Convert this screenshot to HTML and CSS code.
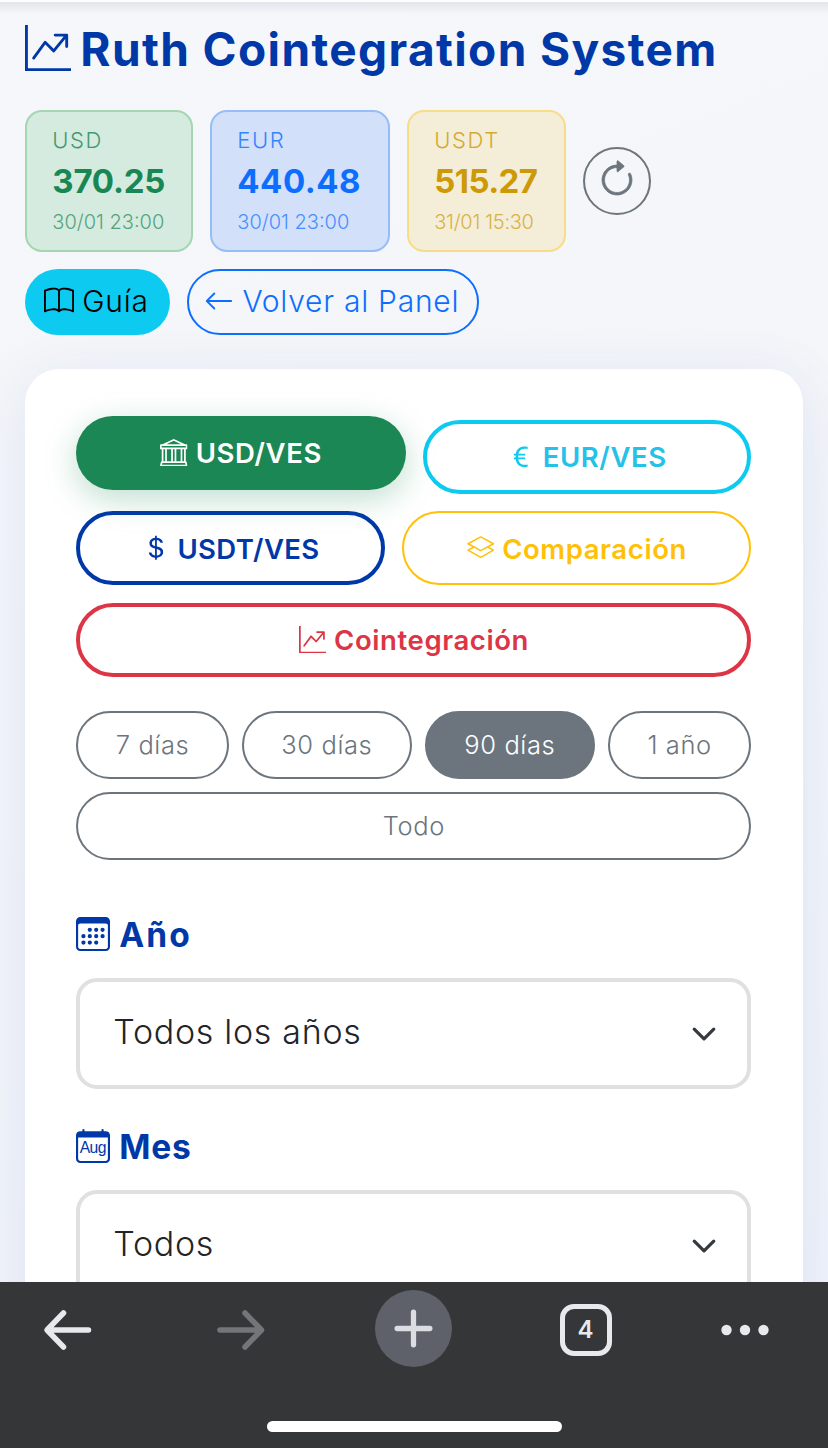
FILE: index.html
```html
<!DOCTYPE html>
<html lang="es">
<head>
    <meta charset="UTF-8">
    <meta name="viewport" content="width=device-width, initial-scale=1.0">
    <title>Ruth Cointegration System</title>
    <link rel="stylesheet" href="styles.css">
</head>
<body>
    <!-- Icons -->
    <svg class="sprite" width="0" height="0">
        <symbol id="graph" viewBox="0 0 16 16"><path d="M0 0h1v15h15v1H0zm10 3.5a.5.5 0 0 1 .5-.5h4a.5.5 0 0 1 .5.5v4a.5.5 0 0 1-1 0V4.9l-3.613 4.417a.5.5 0 0 1-.74.037L7.06 6.767l-3.656 5.027a.5.5 0 0 1-.808-.588l4-5.5a.5.5 0 0 1 .758-.06l2.609 2.61L13.445 4H10.5a.5.5 0 0 1-.5-.5"/></symbol>
        <symbol id="refresh" viewBox="0 0 16 16"><path d="M8 3a5 5 0 1 0 4.546 2.914.5.5 0 0 1 .908-.417A6 6 0 1 1 8 2z"/><path d="M8 4.466V.534a.25.25 0 0 1 .41-.192l2.36 1.966c.12.1.12.284 0 .384L8.41 4.658A.25.25 0 0 1 8 4.466"/></symbol>
        <symbol id="book" viewBox="0 0 16 16"><path d="M1 2.828c.885-.37 2.154-.769 3.388-.893 1.33-.134 2.458.063 3.112.752v9.746c-.935-.53-2.12-.603-3.213-.493-1.18.12-2.37.461-3.287.811zm7.5-.141c.654-.689 1.782-.886 3.112-.752 1.234.124 2.503.523 3.388.893v9.923c-.918-.35-2.107-.692-3.287-.81-1.094-.111-2.278-.039-3.213.492zM8 1.783C7.015.936 5.587.81 4.287.94c-1.514.153-3.042.672-3.994 1.105A.5.5 0 0 0 0 2.5v11a.5.5 0 0 0 .707.455c.882-.4 2.303-.881 3.68-1.02 1.409-.142 2.59.087 3.223.877a.5.5 0 0 0 .78 0c.633-.79 1.814-1.019 3.222-.877 1.378.139 2.8.62 3.681 1.02A.5.5 0 0 0 16 13.5v-11a.5.5 0 0 0-.293-.455c-.952-.433-2.48-.952-3.994-1.105C10.413.809 8.985.936 8 1.783"/></symbol>
        <symbol id="arrow-left" viewBox="0 0 16 16"><path d="M15 8a.5.5 0 0 0-.5-.5H2.707l3.147-3.146a.5.5 0 1 0-.708-.708l-4 4a.5.5 0 0 0 0 .708l4 4a.5.5 0 0 0 .708-.708L2.707 8.5H14.5A.5.5 0 0 0 15 8"/></symbol>
        <symbol id="bank" viewBox="0 0 16 16"><path d="m8 0 6.61 3h.89a.5.5 0 0 1 .5.5v2a.5.5 0 0 1-.5.5H15v7a.5.5 0 0 1 .485.38l.5 2a.498.498 0 0 1-.485.62H.5a.498.498 0 0 1-.485-.62l.5-2A.5.5 0 0 1 1 13V6H.5a.5.5 0 0 1-.5-.5v-2A.5.5 0 0 1 .5 3h.89zM3.777 3h8.447L8 1zM2 6v7h1V6zm2 0v7h2.5V6zm3.5 0v7h1V6zm2 0v7H12V6zM13 6v7h1V6zm2-1V4H1v1zm-.39 9H1.39l-.25 1h13.72z"/></symbol>
        <symbol id="euro" viewBox="0 0 16 16"><path d="M4 9.42h1.063C5.4 12.323 7.317 14 10.34 14c.622 0 1.167-.068 1.659-.185v-1.3c-.484.119-1.045.17-1.659.17-2.1 0-3.455-1.198-3.775-3.264h4.017v-.928H6.497v-.936q-.002-.165.008-.329h4.078v-.927H6.618c.388-1.898 1.719-2.985 3.723-2.985.614 0 1.175.05 1.659.177V2.194A6.6 6.6 0 0 0 10.341 2c-2.928 0-4.82 1.569-5.244 4.3H4v.928h1.01v1.265H4v.928z"/></symbol>
        <symbol id="dollar" viewBox="0 0 16 16"><path d="M4 10.781c.148 1.667 1.513 2.85 3.591 3.003V15h1.043v-1.216c2.27-.179 3.678-1.438 3.678-3.3 0-1.59-.947-2.51-2.956-3.028l-.722-.187V3.467c1.122.11 1.879.714 2.07 1.616h1.47c-.166-1.6-1.54-2.748-3.54-2.875V1H7.591v1.233c-1.939.23-3.27 1.472-3.27 3.156 0 1.454.966 2.483 2.661 2.917l.61.162v4.031c-1.149-.17-1.94-.8-2.131-1.718zm3.391-3.836c-1.043-.263-1.6-.825-1.6-1.616 0-.944.704-1.641 1.8-1.828v3.495l-.2-.05zm1.591 1.872c1.287.323 1.852.859 1.852 1.769 0 1.097-.826 1.828-2.2 1.939V8.73z"/></symbol>
        <symbol id="layers" viewBox="0 0 16 16"><path d="M8 1.7 15.4 5.700 8 9.700.6 5.700zM3.700 7.700.6 9.400 8 13.600l7.400-4.200-3.100-1.700" fill="none" stroke="currentColor" stroke-width=".9" stroke-linejoin="round"/></symbol>
        <symbol id="calendar" viewBox="0 0 16 16"><path d="M14 0H2a2 2 0 0 0-2 2v12a2 2 0 0 0 2 2h12a2 2 0 0 0 2-2V2a2 2 0 0 0-2-2M1 3.857C1 3.384 1.448 3 2 3h12c.552 0 1 .384 1 .857v10.286c0 .473-.448.857-1 .857H2c-.552 0-1-.384-1-.857z"/><path d="M6.5 7a1 1 0 1 0 0-2 1 1 0 0 0 0 2m3 0a1 1 0 1 0 0-2 1 1 0 0 0 0 2m3 0a1 1 0 1 0 0-2 1 1 0 0 0 0 2m-9 3a1 1 0 1 0 0-2 1 1 0 0 0 0 2m3 0a1 1 0 1 0 0-2 1 1 0 0 0 0 2m3 0a1 1 0 1 0 0-2 1 1 0 0 0 0 2m3 0a1 1 0 1 0 0-2 1 1 0 0 0 0 2m-9 3a1 1 0 1 0 0-2 1 1 0 0 0 0 2m3 0a1 1 0 1 0 0-2 1 1 0 0 0 0 2m3 0a1 1 0 1 0 0-2 1 1 0 0 0 0 2"/></symbol>
        <symbol id="chevron" viewBox="0 0 16 16"><path d="m2 5 6 6 6-6" fill="none" stroke="#343a40" stroke-width="2" stroke-linecap="round" stroke-linejoin="round"/></symbol>
    </svg>

    <div class="page">
        <header>
            <h1><svg class="icon"><use href="#graph"/></svg><span>Ruth Cointegration System</span></h1>
            <div class="rates">
                <div class="rate usd">
                    <div class="rate-name">USD</div>
                    <div class="rate-value">370.25</div>
                    <div class="rate-date">30/01 23:00</div>
                </div>
                <div class="rate eur">
                    <div class="rate-name">EUR</div>
                    <div class="rate-value">440.48</div>
                    <div class="rate-date">30/01 23:00</div>
                </div>
                <div class="rate usdt">
                    <div class="rate-name">USDT</div>
                    <div class="rate-value">515.27</div>
                    <div class="rate-date">31/01 15:30</div>
                </div>
                <button class="refresh"><svg class="icon"><use href="#refresh"/></svg></button>
            </div>
            <div class="actions">
                <button class="guide"><svg class="icon"><use href="#book"/></svg><span>Guía</span></button>
                <button class="back"><svg class="icon"><use href="#arrow-left"/></svg><span>Volver al Panel</span></button>
            </div>
        </header>

        <main class="card">
            <div class="tabs">
                <button class="tab tab-usd active"><svg class="icon"><use href="#bank"/></svg><span>USD/VES</span></button>
                <button class="tab tab-eur"><svg class="icon"><use href="#euro"/></svg><span>EUR/VES</span></button>
                <button class="tab tab-usdt"><svg class="icon"><use href="#dollar"/></svg><span>USDT/VES</span></button>
                <button class="tab tab-comp"><svg class="icon"><use href="#layers"/></svg><span>Comparación</span></button>
                <button class="tab tab-coint"><svg class="icon"><use href="#graph"/></svg><span>Cointegración</span></button>
            </div>
            <div class="ranges">
                <button class="range r7">7 días</button>
                <button class="range r30">30 días</button>
                <button class="range r90 active">90 días</button>
                <button class="range r365">1 año</button>
                <button class="range all">Todo</button>
            </div>
            <div class="field">
                <div class="label year"><svg class="icon"><use href="#calendar"/></svg><span>Año</span></div>
                <div class="select"><span>Todos los años</span><svg class="chevron"><use href="#chevron"/></svg></div>
            </div>
            <div class="field">
                <div class="label month">
                    <svg class="icon" viewBox="0 0 16 16">
                        <path d="M3.5 0a.5.5 0 0 1 .5.5V1h8V.5a.5.5 0 0 1 1 0V1h1a2 2 0 0 1 2 2v11a2 2 0 0 1-2 2H2a2 2 0 0 1-2-2V3a2 2 0 0 1 2-2h1V.5a.5.5 0 0 1 .5-.5M1 4v10a1 1 0 0 0 1 1h12a1 1 0 0 0 1-1V4z"/>
                        <text x="7.9" y="11.3" text-anchor="middle">Aug</text>
                    </svg>
                    <span>Mes</span>
                </div>
                <div class="select"><span>Todos</span><svg class="chevron"><use href="#chevron"/></svg></div>
            </div>
        </main>
    </div>

    <nav class="toolbar">
        <div class="tools">
            <svg class="tool" viewBox="0 0 80 80"><path d="M60.500 40H20M35.500 23 19 40l16.500 17"/></svg>
            <svg class="tool off" viewBox="0 0 80 80"><path d="M19 40h41M44 23l16.500 17L44 57"/></svg>
            <div class="plus"><svg viewBox="0 0 80 80"><path d="M40 23v34M23 40h34"/></svg></div>
            <div class="count">4</div>
            <svg class="tool dots" viewBox="0 0 80 80"><circle cx="21.500" cy="40" r="5.200"/><circle cx="40" cy="40" r="5.200"/><circle cx="58.500" cy="40" r="5.200"/></svg>
        </div>
        <div class="home-bar"></div>
    </nav>
</body>
</html>
```

FILE: styles.css
```css
* {
    box-sizing: border-box;
}

body {
    font-family: Inter, "Liberation Sans", sans-serif;
    font-weight: 300;
    margin: 0;
    height: 1448px;
    overflow: hidden;
    background-color: #353638;
}

button {
    font-family: inherit;
    font-weight: inherit;
    background: none;
    padding: 0;
    display: flex;
    align-items: center;
    justify-content: center;
    white-space: nowrap;
}

.sprite {
    display: block;
}

.icon {
    width: 1em;
    height: 1em;
    fill: currentColor;
    flex: none;
}

.page {
    height: 1282px;
    overflow: hidden;
    padding: 0 25.3px;
    border-top: 2px solid #fdfdfd;
    background: linear-gradient(to bottom, #e2e5e9, rgba(244, 246, 250, 0) 12px), linear-gradient(160deg, #f5f7fa 0%, #f3f5f9 50%, #f0f3fb 100%);
}

h1 {
    margin: 0;
    padding-top: 23px;
    height: 108px;
    display: flex;
    align-items: flex-start;
    gap: 9px;
    font-size: 46px;
    line-height: 48px;
    font-weight: 700;
    color: #0038a8;
    letter-spacing: 1.38px;
    white-space: nowrap;
}

.rates {
    display: flex;
    align-items: center;
    gap: 17px;
}

.rate {
    height: 142px;
    padding: 13px 0 0 25px;
    border: 2px solid;
    border-radius: 17px;
}

.rate-name {
    font-size: 22px;
    line-height: 31px;
    letter-spacing: 1.6px;
    opacity: 0.8;
}

.rate-value {
    font-size: 33px;
    line-height: 50px;
    font-weight: 700;
}

.rate-date {
    font-size: 20px;
    line-height: 33px;
    opacity: 0.7;
}

.usd {
    width: 168px;
    color: #198754;
    background-color: #d5ebdf;
    border-color: #a3d6b1;
}

.usd .rate-value {
    letter-spacing: -0.2px;
}

.eur {
    width: 180px;
    color: #0d6efd;
    background-color: #d2e0f9;
    border-color: #97bdf8;
}

.eur .rate-value {
    letter-spacing: 0.5px;
}

.usdt {
    width: 159px;
    color: #cc9a06;
    background-color: #f4edd7;
    border-color: #f8dc88;
}

.usdt .rate-value {
    letter-spacing: -0.6px;
}

.usdt .rate-date {
    letter-spacing: -0.3px;
}

.refresh {
    width: 68px;
    height: 68px;
    border: 2px solid #6c757d;
    border-radius: 50%;
    color: #6c757d;
    font-size: 40px;
}

.refresh .icon {
    margin: 0 1px 2px 0;
    stroke: #6c757d;
    stroke-width: 0.3px;
}

.actions {
    display: flex;
    gap: 17px;
    margin-top: 17px;
}

.actions button {
    height: 66px;
    border-radius: 33px;
    font-size: 30px;
    letter-spacing: 0.75px;
    padding: 0 2px 2px 0;
}

.actions .icon {
    width: 30px;
    height: 30px;
}

.guide {
    width: 144.5px;
    gap: 8px;
    border: 0;
    color: #000;
    background-color: #0dcaf0;
}

.back {
    width: 292px;
    gap: 8px;
    border: 2px solid #0d6efd;
    color: #0d6efd;
}

.card {
    margin-top: 33.5px;
    padding: 51px 51px 0;
    height: 1100px;
    border-radius: 34px;
    background-color: #fff;
    box-shadow: 0 10px 60px rgba(0, 56, 168, 0.09);
}

.tabs {
    display: flex;
    flex-wrap: wrap;
    gap: 17.6px 17px;
}

.tab {
    height: 74px;
    border: 4px solid;
    border-radius: 37px;
    font-size: 27.5px;
    font-weight: 600;
    letter-spacing: 0.6px;
    gap: 8px;
}

.tab span {
    padding-top: 1px;
}

.tab .icon {
    width: 27.5px;
    height: 27.5px;
}

.tab-usd {
    width: 329.5px;
    color: #fff;
    background-color: #1b8755;
    border: 0;
    transform: translateY(-4px);
    box-shadow: 0 9px 32px rgba(25, 135, 84, 0.28);
}

.tab-eur {
    width: 328.5px;
    color: #0dcaf0;
}

.tab-eur span {
    color: #24c2e8;
}

.tab-usdt {
    width: 309px;
    color: #0038a8;
    letter-spacing: 0.4px;
}

.tab-comp {
    width: 349px;
    color: #ffc107;
    border-width: 2px;
}

.tab-coint {
    width: 675px;
    color: #dc3545;
}

.ranges {
    display: flex;
    flex-wrap: wrap;
    gap: 13px;
    margin-top: 34px;
}

.range {
    height: 68px;
    border: 2px solid #6c757d;
    border-radius: 34px;
    color: #6c757d;
    font-size: 25.5px;
    letter-spacing: 0.6px;
}

.r7 {
    width: 152.5px;
}

.r30 {
    width: 170px;
}

.r90 {
    width: 170px;
}

.r365 {
    width: 143.5px;
}

.all {
    width: 675px;
}

.range.active {
    color: #fff;
    background-color: #6c757d;
}

.field {
    width: 675px;
    height: 212px;
}

.ranges + .field {
    margin-top: 57px;
}

.label {
    display: flex;
    align-items: center;
    gap: 9px;
    height: 34px;
    color: #0038a8;
    font-size: 33.5px;
    font-weight: 700;
}

.label span {
    padding-top: 3px;
}

.label .icon {
    width: 34px;
    height: 34px;
}

.year {
    letter-spacing: 2px;
}

.month {
    letter-spacing: 0.8px;
}

.month text {
    font-size: 7.4px;
    font-weight: 400;
    letter-spacing: -0.3px;
    font-family: "Liberation Sans", sans-serif;
}

.select {
    display: flex;
    align-items: center;
    justify-content: space-between;
    height: 111px;
    margin-top: 27px;
    padding: 0 30px 3px 33px;
    border: 4px solid #e0e0e0;
    border-radius: 21px;
    color: #212529;
    font-size: 34px;
    letter-spacing: 0.7px;
}

.chevron {
    width: 26px;
    height: 26px;
    margin-top: 4px;
}

.toolbar {
    height: 166px;
    background-color: #353638;
}

.tools {
    display: flex;
    align-items: center;
    gap: 93px;
    height: 95px;
    padding-left: 27.5px;
}

.tool {
    width: 80px;
    height: 80px;
    flex: none;
    fill: none;
    stroke: #e8e9ed;
    stroke-width: 5.5;
    stroke-linecap: round;
    stroke-linejoin: round;
}

.off {
    stroke: #747578;
}

.dots {
    fill: #e8e9ed;
    stroke: none;
}

.plus {
    flex: none;
    width: 77px;
    height: 77px;
    margin: 0 15px 2px 1px;
    border-radius: 50%;
    background-color: #5e6169;
}

.plus svg {
    display: block;
    fill: none;
    stroke: #dcdde2;
    stroke-width: 5.5;
    stroke-linecap: round;
}

.count {
    display: flex;
    align-items: center;
    justify-content: center;
    flex: none;
    width: 52px;
    height: 52px;
    border: 5px solid #e8e9ed;
    border-radius: 14px;
    color: #e8e9ed;
    font-size: 24px;
    font-weight: 600;
}

.home-bar {
    width: 295px;
    height: 11px;
    margin: 44px auto 0;
    border-radius: 6px;
    background-color: #fff;
}
```
